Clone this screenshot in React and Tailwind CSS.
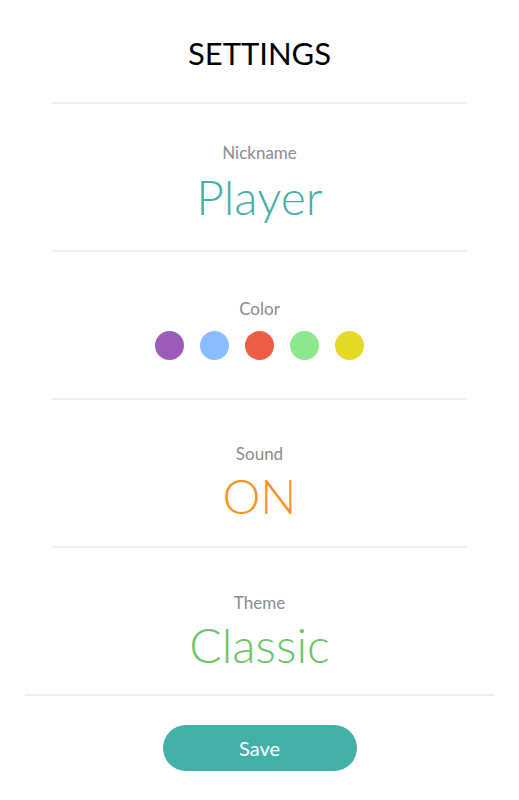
import React from "react";

const Line = ({ wide }) => (
  <div className={wide ? "mx-[25px] h-[2px] bg-[#eeeeee]" : "mx-[52px] h-[2px] bg-[#eeeeee]"} />
);

const Section = ({ label, children, pad, gap = "mt-[6px]" }) => (
  <div className={"h-[146px] flex flex-col items-center justify-center " + pad}>
    <div className="text-[17px] leading-[20px] text-[#8c8c8c]">{label}</div>
    <div className={gap}>{children}</div>
  </div>
);

export default function App() {
  const colors = ["#9b5bb7", "#8abcff", "#ee5d45", "#8be88f", "#e6da26"];
  return (
    <div
      className="w-full bg-white min-h-[800px]"
      style={{ fontFamily: "Lato, 'Open Sans', sans-serif" }}
    >
      <div className="h-[102px] flex items-center justify-center pt-[4px]">
        <h1 className="text-[31px] leading-[40px] text-black">SETTINGS</h1>
      </div>
      <Line />
      <Section label="Nickname" pad="pt-[14px]">
        <div className="text-[48px] leading-[56px] font-light text-[#42b0a8]">Player</div>
      </Section>
      <Line />
      <Section label="Color" pad="pt-[8px]" gap="mt-[12px]">
        <div className="flex gap-4">
          {colors.map((c) => (
            <div key={c} className="w-[29px] h-[29px] rounded-full" style={{ backgroundColor: c }} />
          ))}
        </div>
      </Section>
      <Line />
      <Section label="Sound" pad="pt-[22px]" gap="mt-[4px]">
        <div className="text-[48px] leading-[56px] font-light text-[#f7931e]">ON</div>
      </Section>
      <Line />
      <Section label="Theme" pad="pt-[24px]" gap="mt-[4px]">
        <div className="text-[48px] leading-[56px] font-light text-[#6cc36a]">Classic</div>
      </Section>
      <Line wide />
      <div className="flex justify-center pt-[29px]">
        <button className="w-[194px] h-[46px] rounded-full bg-[#43b0a8] text-white text-[20px] leading-[24px] font-normal">
          Save
        </button>
      </div>
    </div>
  );
}
